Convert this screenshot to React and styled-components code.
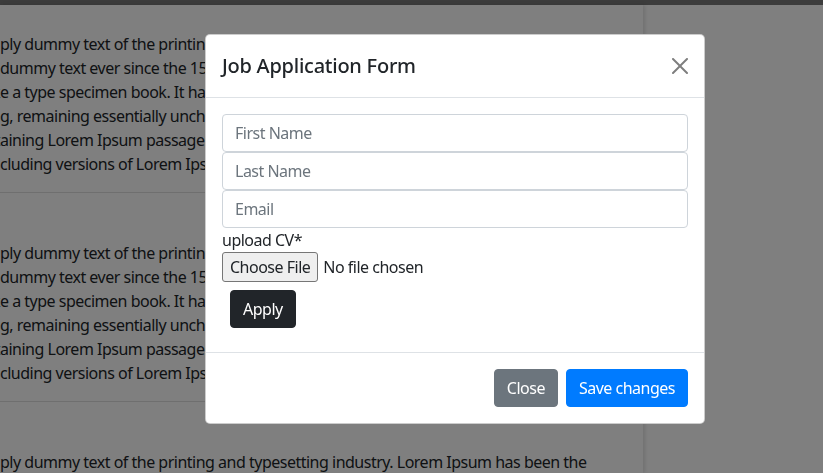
import React from 'react';
import styled, { createGlobalStyle } from 'styled-components';

const GlobalStyle = createGlobalStyle`
  * { box-sizing: border-box; }
  html, body { margin: 0; height: 100%; overflow: hidden; }
  body {
    font-family: "Noto Sans", "Open Sans", sans-serif;
    font-size: 16px;
    line-height: 1.5;
    letter-spacing: -0.5px;
    color: #212529;
    background: #fff;
  }
`

const TopBar = styled.div`
  height: 5px;
  background: #787878;
`

const Main = styled.div`
  display: flex;
  height: calc(100vh - 5px);
`

const Column = styled.div`
  width: 643px;
  padding-top: 27px;
  overflow: hidden;
  box-shadow: 2px 0 4px rgba(0, 0, 0, 0.12);
`

const Paragraph = styled.div`
  margin: 0;
`

const Line = styled.div`
  display: flex;
  white-space: pre;
`

// the start of each line runs off the left edge of the page
const Cut = styled.span`
  display: flex;
  justify-content: flex-end;
  width: 0;
`

const Divider = styled.hr`
  margin: 16px 0 48px;
  border: 0;
  border-top: 1px solid #dedede;
`

const Backdrop = styled.div`
  position: fixed;
  inset: 0;
  background: rgba(0, 0, 0, 0.5);
  padding: 34px 0 0 205px;
`

const Dialog = styled.div`
  width: 500px;
  background: #fff;
  border: 1px solid rgba(0, 0, 0, 0.2);
  border-radius: 5px;
`

const Header = styled.div`
  display: flex;
  align-items: center;
  padding: 16px;
  border-bottom: 1px solid #dee2e6;
`

const Title = styled.h5`
  margin: 0;
  font-size: 20px;
  font-weight: 500;
  line-height: 1.5;
  letter-spacing: -0.25px;
`

const CloseX = styled.button`
  width: 24px;
  height: 24px;
  padding: 4px;
  margin: -4px -4px -4px auto;
  border: 0;
  background: transparent;
  opacity: 0.5;
  display: flex;
  cursor: pointer;
`

const Body = styled.div`
  display: flex;
  flex-direction: column;
  padding: 16px;
`

const Field = styled.input`
  display: block;
  width: 100%;
  height: 38px;
  padding: 6px 12px;
  font: inherit;
  letter-spacing: inherit;
  color: #212529;
  border: 1px solid #ced4da;
  border-radius: 4px;

  &::placeholder {
    color: #6c757d;
  }
`

const Label = styled.label`
  display: block;
  line-height: 24px;
`

const FileInput = styled.input`
  font: inherit;
  letter-spacing: inherit;
  color: #212529;
  height: 30px;

  &::file-selector-button {
    font: inherit;
    letter-spacing: inherit;
    line-height: 24px;
    padding: 2px 7px;
    margin-right: 5px;
    color: #212529;
    background: #efefef;
    border: 1px solid #767676;
    border-radius: 3px;
  }
`

const Button = styled.button`
  font: inherit;
  letter-spacing: inherit;
  line-height: 1.5;
  padding: 6px 12px;
  margin: ${p => p.$margin || '4px'};
  color: #fff;
  background: ${p => p.$bg};
  border: 1px solid ${p => p.$bg};
  border-radius: 4px;
  cursor: pointer;
`

const ApplyButton = styled(Button)`
  align-self: flex-start;
`

const Footer = styled.div`
  display: flex;
  justify-content: flex-end;
  align-items: center;
  padding: 12px;
  border-top: 1px solid #dee2e6;
`

const lines = [
  ['Lorem Ipsum is sim', 'ply dummy text of the printing and typesetting industry. Lorem Ipsum has been the'],
  ["industry's standard ", 'dummy text ever since the 1500s, when an unknown printer took a galley of type and'],
  ['scrambled it to mak', 'e a type specimen book. It has survived not only five centuries, but also the leap into'],
  ['electronic typesettin', 'g, remaining essentially unchanged. It was popularised in the 1960s with the release of'],
  ['Letraset sheets cont', 'aining Lorem Ipsum passages, and more recently with desktop publishing software like'],
  ['Aldus PageMaker in', 'cluding versions of Lorem Ipsum.'],
]

const Article = () => (
  <>
    <Paragraph>
      {lines.map(([hidden, shown], i) => (
        <Line key={i}><Cut>{hidden}</Cut>{shown}</Line>
      ))}
    </Paragraph>
    <Divider />
  </>
)

const CloseIcon = () => (
  <svg width="16" height="16" viewBox="0 0 16 16" fill="#000">
    <path d="M.293.293a1 1 0 0 1 1.414 0L8 6.586 14.293.293a1 1 0 1 1 1.414 1.414L9.414 8l6.293 6.293a1 1 0 0 1-1.414 1.414L8 9.414l-6.293 6.293a1 1 0 0 1-1.414-1.414L6.586 8 .293 1.707a1 1 0 0 1 0-1.414z" />
  </svg>
)

const App = () => {
  return (
    <>
      <GlobalStyle />
      <TopBar />
      <Main>
        <Column>
          <Article />
          <Article />
          <Article />
        </Column>
      </Main>

      <Backdrop>
        <Dialog>
          <Header>
            <Title>Job Application Form</Title>
            <CloseX aria-label="Close"><CloseIcon /></CloseX>
          </Header>
          <Body>
            <Field type="text" placeholder="First Name" />
            <Field type="text" placeholder="Last Name" />
            <Field type="email" placeholder="Email" />
            <Label htmlFor="cv">upload CV*</Label>
            <div>
              <FileInput id="cv" type="file" />
            </div>
            <ApplyButton $bg="#212529" $margin="8px">Apply</ApplyButton>
          </Body>
          <Footer>
            <Button $bg="#6c757d">Close</Button>
            <Button $bg="#007bff">Save changes</Button>
          </Footer>
        </Dialog>
      </Backdrop>
    </>
  )
}

export default App;
